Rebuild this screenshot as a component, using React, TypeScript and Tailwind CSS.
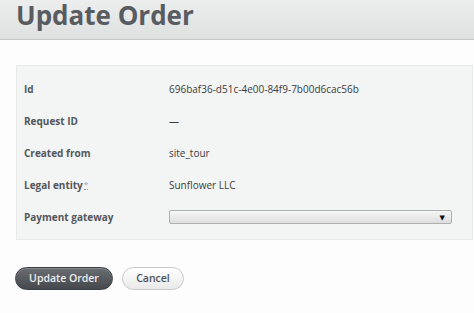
import React from "react";

const rows = [
  { label: "Id", value: "696baf36-d51c-4e00-84f9-7b00d6cac56b" },
  { label: "Request ID", value: "—" },
  { label: "Created from", value: "site_tour" },
  { label: "Legal entity", value: "Sunflower LLC", required: true },
];

function App() {
  return (
    <div
      className="w-[474px] h-[313px] overflow-hidden bg-[#fdfdfd]"
      style={{ fontFamily: '"Open Sans", "DejaVu Sans", sans-serif' }}
    >
      <div className="h-[40px] pl-[16px] bg-gradient-to-b from-[#eceded] to-[#dfe1e1] border-b border-[#c6c9c9]">
        <h1 className="text-[26px] leading-[30px] font-bold text-[#585c60]">Update Order</h1>
      </div>

      <div className="mt-[25px] ml-[16px] w-[457px] bg-[#f3f4f4] border border-[#e8e9e9] pt-[7px] pb-[6px]">
        {rows.map((r) => (
          <div key={r.label} className="flex items-center h-[32px] text-[10px]">
            <div className="w-[152px] pl-[7px] font-bold text-[#53575b]">
              {r.label}
              {r.required && (
                <abbr className="ml-px text-[#9a9a9a] font-normal no-underline border-b border-dotted border-[#9a9a9a] text-[8px] align-top">
                  *
                </abbr>
              )}
            </div>
            <div className="text-[#3c3c3c]">{r.value}</div>
          </div>
        ))}
        <div className="flex items-center h-[32px] text-[10px]">
          <div className="w-[152px] pl-[7px] font-bold text-[#53575b]">Payment gateway</div>
          <div className="w-[283px] h-[14px] rounded-[2px] border border-[#aeb0b0] bg-gradient-to-b from-[#f6f6f6] to-[#dedede] flex items-center justify-end pr-[6px]">
            <span className="text-[7px] leading-none text-[#111]">▼</span>
          </div>
        </div>
      </div>

      <div className="flex items-center gap-[9px] mt-[27px] ml-[15px]">
        <button className="h-[23px] w-[98px] rounded-full border border-[#3c4044] bg-gradient-to-b from-[#6a6e72] to-[#45494d] text-[10.5px] font-semibold text-[#eeeeee] shadow-[inset_0_1px_0_rgba(255,255,255,0.2)]">
          Update Order
        </button>
        <button className="h-[23px] w-[62px] rounded-full border border-[#c9c9c9] bg-gradient-to-b from-[#ffffff] to-[#e9e9e9] text-[10.5px] font-semibold text-[#4f5256]">
          Cancel
        </button>
      </div>
    </div>
  );
}

export default App;
